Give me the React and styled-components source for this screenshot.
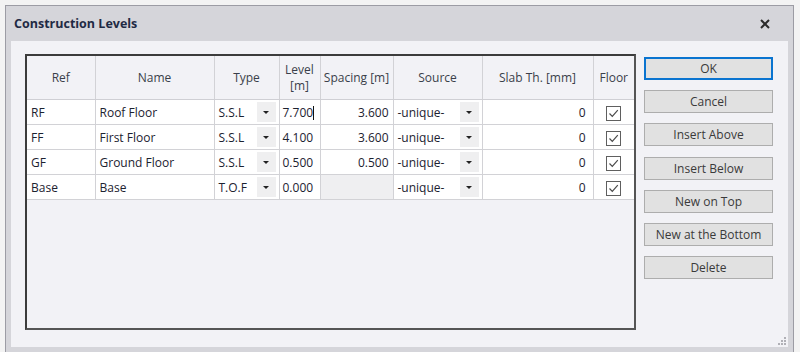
import styled, { createGlobalStyle } from 'styled-components'

const GlobalStyle = createGlobalStyle`
  html, body {
    margin: 0;
    padding: 0;
    background: #f3f3f3;
    font-family: "Open Sans", "Liberation Sans", sans-serif;
  }
`

const Window = styled.div`
  margin: 5px 6px 4px 5px;
  height: 341px;
  border: 1px solid #9c9ca4;
  background: #d5d5da;
  display: flex;
  flex-direction: column;
  padding: 0 5px 5px 5px;
`

const TitleBar = styled.div`
  height: 35px;
  display: flex;
  align-items: center;
  justify-content: space-between;
  padding: 0 18px 0 3px;
  h1 {
    margin: 0;
    font-size: 12.5px;
    font-weight: 700;
    color: #1f2a44;
  }
`

const Body = styled.div`
  flex: 1;
  background: #f2f2f6;
  display: flex;
  align-items: flex-start;
  gap: 8px;
  padding: 13px 0 0 14px;
  position: relative;
`

const Grid = styled.div`
  width: 607px;
  height: 272px;
  border: 2px solid #3c3c3c;
  border-right-color: #555;
  border-bottom-color: #555;
  background: #f2f2f6;
`

const Table = styled.table`
  border-collapse: collapse;
  table-layout: fixed;
  width: 607px;
  font-size: 12px;
  color: #1c2230;
`

const HeadCell = styled.th`
  height: 43px;
  padding: 0 2px;
  font-weight: 400;
  color: #3a3f4a;
  line-height: 16px;
  text-align: center;
  border-right: 1px solid #d2d2d6;
  border-bottom: 1px solid #cfcfd4;
  &:last-child {
    border-right: none;
  }
`

const Row = styled.tr`
  height: 25px;
  background: #fff;
`

const Cell = styled.td`
  padding: 0 4px;
  height: 24px;
  text-align: ${(p) => p.$align || 'left'};
  background: ${(p) => (p.$disabled ? '#efeff1' : '#fff')};
  border-right: 1px solid #d2d2d6;
  border-bottom: 1px solid #d2d2d6;
  white-space: nowrap;
  &:last-child {
    border-right: none;
  }
`

const ComboCell = styled.td`
  padding: 0 3px 0 4px;
  height: 24px;
  border-right: 1px solid #d2d2d6;
  border-bottom: 1px solid #d2d2d6;
  background: #fff;
  div {
    display: flex;
    align-items: center;
    justify-content: space-between;
  }
`

const DropButton = styled.span`
  width: 19px;
  height: 20px;
  background: #efeff0;
  display: flex;
  align-items: center;
  justify-content: center;
  &::after {
    content: '';
    border-left: 3px solid transparent;
    border-right: 3px solid transparent;
    border-top: 3px solid #222;
  }
`

const Caret = styled.span`
  display: inline-block;
  width: 1px;
  height: 14px;
  background: #111;
  vertical-align: middle;
`

const Check = styled.span`
  display: inline-flex;
  width: 13px;
  height: 13px;
  border: 1px solid #5f5f5f;
  background: #fff;
  align-items: center;
  justify-content: center;
  vertical-align: middle;
`

const Buttons = styled.div`
  display: flex;
  flex-direction: column;
  gap: 10.2px;
  padding-top: 3px;
`

const Button = styled.button`
  width: 129px;
  height: 23px;
  font-family: inherit;
  font-size: 12px;
  color: #3a3a3a;
  background: #e1e1e1;
  border: 1px solid #adadad;
  border-radius: 0;
  padding: 0;
  ${(p) => p.$default && 'border: 2px solid #0a74d0;'}
`

const Grip = styled.svg`
  position: absolute;
  right: 2px;
  bottom: 2px;
`

const columns = [
  { label: 'Ref', width: 68 },
  { label: 'Name', width: 119 },
  { label: 'Type', width: 65 },
  { label: 'Level [m]', width: 41, wrap: true },
  { label: 'Spacing [m]', width: 73 },
  { label: 'Source', width: 89 },
  { label: 'Slab Th. [mm]', width: 111 },
  { label: 'Floor', width: 41 },
]

const rows = [
  { ref: 'RF', name: 'Roof Floor', type: 'S.S.L', level: '7.700', spacing: '3.600', caret: true },
  { ref: 'FF', name: 'First Floor', type: 'S.S.L', level: '4.100', spacing: '3.600' },
  { ref: 'GF', name: 'Ground Floor', type: 'S.S.L', level: '0.500', spacing: '0.500' },
  { ref: 'Base', name: 'Base', type: 'T.O.F', level: '0.000', spacing: null },
]

const buttons = ['OK', 'Cancel', 'Insert Above', 'Insert Below', 'New on Top', 'New at the Bottom', 'Delete']

function CheckMark() {
  return (
    <Check>
      <svg width="11" height="11" viewBox="0 0 11 11">
        <path d="M1.5 5.5 L4.3 8.3 L9.8 2.2" fill="none" stroke="#4a4a4a" strokeWidth="1.2" />
      </svg>
    </Check>
  )
}

export default function App() {
  return (
    <>
      <GlobalStyle />
      <Window>
        <TitleBar>
          <h1>Construction Levels</h1>
          <svg width="10" height="10" viewBox="0 0 10 10">
            <path d="M1 1 L9 9 M9 1 L1 9" stroke="#2b2b2b" strokeWidth="2" />
          </svg>
        </TitleBar>
        <Body>
          <Grid>
            <Table>
              <colgroup>
                {columns.map((c) => (
                  <col key={c.label} style={{ width: c.width }} />
                ))}
              </colgroup>
              <thead>
                <tr>
                  {columns.map((c) => (
                    <HeadCell key={c.label}>
                      {c.wrap ? (
                        <>
                          Level
                          <br />
                          [m]
                        </>
                      ) : (
                        c.label
                      )}
                    </HeadCell>
                  ))}
                </tr>
              </thead>
              <tbody>
                {rows.map((r) => (
                  <Row key={r.ref}>
                    <Cell>{r.ref}</Cell>
                    <Cell>{r.name}</Cell>
                    <ComboCell>
                      <div>
                        {r.type}
                        <DropButton />
                      </div>
                    </ComboCell>
                    <Cell style={{ paddingLeft: 3 }}>
                      {r.level}
                      {r.caret && <Caret />}
                    </Cell>
                    <Cell $align="right" $disabled={r.spacing === null}>
                      {r.spacing}
                    </Cell>
                    <ComboCell>
                      <div>
                        -unique-
                        <DropButton />
                      </div>
                    </ComboCell>
                    <Cell $align="right" style={{ paddingRight: 7 }}>
                      0
                    </Cell>
                    <Cell $align="center">
                      <CheckMark />
                    </Cell>
                  </Row>
                ))}
              </tbody>
            </Table>
          </Grid>
          <Buttons>
            {buttons.map((b) => (
              <Button key={b} $default={b === 'OK'}>
                {b}
              </Button>
            ))}
          </Buttons>
          <Grip width="8" height="8" viewBox="0 0 8 8">
            <rect x="6" y="0" width="2" height="2" fill="#b0b0b6" />
            <rect x="3" y="3" width="2" height="2" fill="#b0b0b6" />
            <rect x="6" y="3" width="2" height="2" fill="#b0b0b6" />
            <rect x="0" y="6" width="2" height="2" fill="#b0b0b6" />
            <rect x="3" y="6" width="2" height="2" fill="#b0b0b6" />
            <rect x="6" y="6" width="2" height="2" fill="#b0b0b6" />
          </Grip>
        </Body>
      </Window>
    </>
  )
}
